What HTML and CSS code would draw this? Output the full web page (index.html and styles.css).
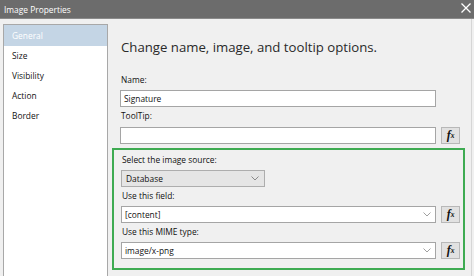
FILE: index.html
```html
<!DOCTYPE html>
<html>
<head>
<meta charset="utf-8">
<link rel="stylesheet" href="styles.css">
</head>
<body>
<div class="window">
  <div class="titlebar">
    <span class="title">Image Properties</span>
    <svg class="close" width="10" height="10" viewBox="0 0 10 10"><path d="M0.5 0.5 L9.5 9.5 M9.5 0.5 L0.5 9.5" stroke="#ffffff" stroke-width="1.3" fill="none"/></svg>
  </div>
  <div class="content">
    <div class="sidebar">
      <div class="nav-item selected">General</div>
      <div class="nav-item">Size</div>
      <div class="nav-item">Visibility</div>
      <div class="nav-item">Action</div>
      <div class="nav-item">Border</div>
    </div>
    <div class="main">
      <h1 class="heading">Change name, image, and tooltip options.</h1>
      <div class="label label-first">Name:</div>
      <div class="textbox name-box">Signature</div>
      <div class="label label-tip">ToolTip:</div>
      <div class="row">
        <div class="textbox grow"></div>
        <div class="fx-btn"><i>f</i><sub>x</sub></div>
      </div>
      <div class="group">
        <div class="label">Select the image source:</div>
        <div class="select">
          <span>Database</span>
          <svg class="chev" width="8" height="5" viewBox="0 0 8 5"><path d="M0.5 0.5 L4 4 L7.5 0.5" stroke="#8a8a8a" stroke-width="1" fill="none"/></svg>
        </div>
        <div class="label">Use this field:</div>
        <div class="row">
          <div class="textbox grow combo"><span>[content]</span>
            <svg class="chev" width="8" height="5" viewBox="0 0 8 5"><path d="M0.5 0.5 L4 4 L7.5 0.5" stroke="#a0a0a0" stroke-width="1" fill="none"/></svg>
          </div>
          <div class="fx-btn"><i>f</i><sub>x</sub></div>
        </div>
        <div class="label">Use this MIME type:</div>
        <div class="row">
          <div class="textbox grow combo"><span>image/x-png</span>
            <svg class="chev" width="8" height="5" viewBox="0 0 8 5"><path d="M0.5 0.5 L4 4 L7.5 0.5" stroke="#a0a0a0" stroke-width="1" fill="none"/></svg>
          </div>
          <div class="fx-btn"><i>f</i><sub>x</sub></div>
        </div>
      </div>
    </div>
  </div>
</div>
</body>
</html>
```
FILE: styles.css
```css
* { box-sizing: border-box; }
html, body { margin: 0; padding: 0; }
body {
  width: 474px;
  height: 276px;
  overflow: hidden;
  background: #f0f0f0;
  font-family: "Open Sans", "Noto Sans", sans-serif;
  font-size: 8.4px;
  color: #111111;
}
.window { width: 474px; height: 276px; display: flex; flex-direction: column; }
.titlebar {
  height: 19px;
  background: #6c6c6c;
  border-bottom: 1px solid #8a8a8a;
  display: flex;
  align-items: center;
  justify-content: space-between;
  padding: 0 3px 0 4px;
  color: #ffffff;
  font-size: 8.4px;
}
.close { margin-top: -2px; }
.content {
  flex: 1;
  display: flex;
  padding-top: 5px;
  border-right: 1px solid #d6d6d6;
  margin-right: 2px;
}
.sidebar {
  margin-left: 3px;
  width: 105px;
  background: #ffffff;
  border: 1px solid #a8a8a8;
  border-bottom: none;
  display: flex;
  flex-direction: column;
}
.nav-item {
  height: 20px;
  line-height: 20px;
  padding-left: 8px;
  color: #111111;
}
.nav-item.selected {
  height: 21px;
  line-height: 21px;
  background: #c4d5e5;
  color: #ffffff;
}
.main {
  flex: 1;
  padding: 12px 0 0 12px;
  display: flex;
  flex-direction: column;
}
.heading {
  margin: 0 0 0 1px;
  font-size: 13.2px;
  font-weight: 400;
  line-height: 22px;
  color: #2a2a2a;
}
.label { line-height: 14px; height: 14px; margin: 2px 0 3px 1px; }
.label-first { margin-top: 15px; }
.label-tip { margin-bottom: 4px; }
.textbox {
  height: 17px;
  background: #ffffff;
  border: 1px solid #a5a5a5;
  padding-left: 3px;
  line-height: 15px;
  display: flex;
  align-items: center;
}
.name-box { width: 316px; }
.row { display: flex; width: 340px; gap: 5px; }
.grow { flex: 1; }
.combo { justify-content: space-between; padding-right: 4px; }
.fx-btn {
  width: 19px;
  height: 17px;
  background: #e1e1e1;
  border: 1px solid #b8b8b8;
  display: flex;
  align-items: center;
  justify-content: center;
  font-family: "Liberation Serif", serif;
  font-weight: bold;
  font-size: 12px;
  color: #111;
}
.fx-btn i { font-style: italic; }
.fx-btn sub { font-size: 7.5px; font-style: italic; vertical-align: -1px; }
.group {
  margin: 4px 0 0 -8px;
  width: 353px;
  border: 2px solid #3eab52;
  padding: 1px 3px 9px 7px;
}
.group .row { width: 339px; }
.select {
  width: 144px;
  height: 17px;
  background: #e5e5e5;
  border: 1px solid #adadad;
  padding: 0 5px 0 4px;
  display: flex;
  align-items: center;
  justify-content: space-between;
}
```
